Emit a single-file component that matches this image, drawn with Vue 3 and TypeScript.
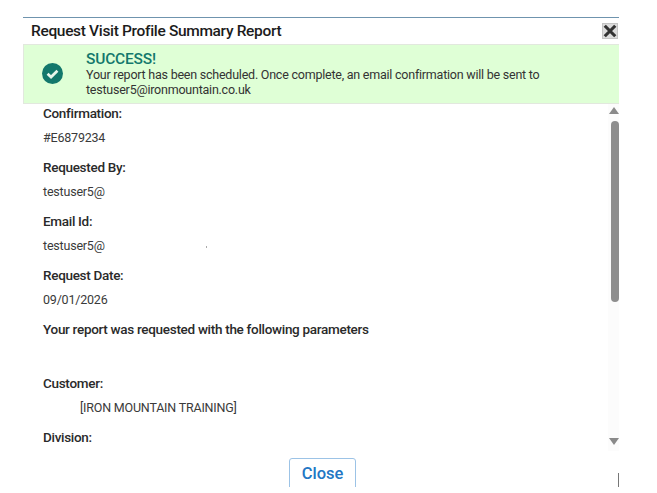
<script setup lang="ts">
interface Field { label: string; value: string; speck?: boolean }
const fields: Field[] = [
  { label: 'Confirmation:', value: '#E6879234' },
  { label: 'Requested By:', value: 'testuser5@' },
  { label: 'Email Id:', value: 'testuser5@', speck: true },
  { label: 'Request Date:', value: '09/01/2026' },
]
</script>

<template>
  <div class="page">
    <div class="dialog">
      <span class="rule-gap gap-a"></span>
      <span class="rule-gap gap-b"></span>
      <header class="title-bar">
        <h1 class="title">Request Visit Profile Summary Report</h1>
        <button class="x-btn" aria-label="Close">
          <svg viewBox="0 0 16 16" width="14" height="14">
            <path d="M2 2 L14 14 M14 2 L2 14" stroke="#333" stroke-width="3.6" fill="none" />
          </svg>
        </button>
      </header>
      <section class="banner">
        <svg class="check" viewBox="0 0 20 20" width="21" height="21">
          <circle cx="10" cy="10" r="10" fill="#13786c" />
          <path d="M5.3 10.3 L8.6 13.4 L14.7 7.4" stroke="#e9f7ec" stroke-width="2.6" fill="none" />
        </svg>
        <div class="banner-text">
          <div class="success">SUCCESS!</div>
          <div class="msg">Your report has been scheduled. Once complete, an email confirmation will be sent to testuser5@ironmountain.co.uk</div>
        </div>
      </section>
      <div class="content">
        <div class="scroll-body">
          <div v-for="f in fields" :key="f.label" class="field">
            <div class="label">{{ f.label }}</div>
            <div class="value">{{ f.value }}<span v-if="f.speck" class="speck"></span></div>
          </div>
          <div class="label para">Your report was requested with the following parameters</div>
          <div class="field">
            <div class="label">Customer:</div>
            <div class="value indented">[IRON MOUNTAIN TRAINING]</div>
          </div>
          <div class="field">
            <div class="label">Division:</div>
          </div>
        </div>
        <div class="scrollbar">
          <span class="arrow up"></span>
          <span class="thumb"></span>
          <span class="spacer"></span>
          <span class="arrow down"></span>
        </div>
      </div>
      <footer class="footer">
        <button class="close-btn">Close</button>
      </footer>
    </div>
  </div>
</template>

<style>
html, body { margin: 0; background: #fff; }
</style>

<style scoped>
.page {
  width: 657px;
  height: 493px;
  box-sizing: border-box;
  padding: 17px 38px 0 23px;
  overflow: hidden;
  background: #fff;
  font-family: Roboto, "Liberation Sans", sans-serif;
  color: #333;
}
.dialog {
  height: 469px;
  display: flex;
  flex-direction: column;
  border-top: 1px solid #6f94ae;
  overflow: hidden;
  position: relative;
}
.rule-gap {
  position: absolute;
  top: -1px;
  height: 1px;
  background: repeating-linear-gradient(90deg, #fff 0 3px, #b9cbd8 3px 6px);
}
.gap-a { left: 482px; width: 60px; }
.gap-b { left: 572px; width: 24px; }
.title-bar {
  height: 26px;
  padding: 0 1px 0 8px;
  display: flex;
  align-items: center;
  justify-content: space-between;
}
.title {
  margin: 0;
  font-size: 15.5px;
  font-weight: 500;
  letter-spacing: -0.33px;
  color: #1c1c1c;
  line-height: 26px;
}
.x-btn {
  width: 16px;
  height: 16px;
  padding: 0;
  border: 1px solid #c4c4c4;
  background: #dcdcdc;
  display: flex;
  align-items: center;
  justify-content: center;
}
.banner {
  height: 60px;
  box-sizing: border-box;
  flex: none;
  background: #dfffd6;
  border: 1px solid #e2e8de;
  border-right: 0;
  display: flex;
  align-items: center;
  padding: 0 60px 2px 18px;
  gap: 23px;
}
.check { flex: none; margin-top: 1px; }
.banner-text { margin-top: 3px; }
.success {
  color: #13786c;
  font-size: 15.5px;
  font-weight: 500;
  letter-spacing: -0.2px;
  line-height: 15px;
}
.msg {
  font-size: 12.5px;
  letter-spacing: -0.23px;
  line-height: 14.5px;
  margin-top: 1px;
  color: #333;
}
.content {
  height: 347px;
  flex: none;
  display: flex;
  overflow: hidden;
}
.scroll-body {
  flex: 1;
  padding: 0 0 0 20px;
  overflow: hidden;
}
.field { margin-bottom: 6px; }
.label {
  font-size: 13.5px;
  font-weight: 500;
  letter-spacing: -0.3px;
  line-height: 18px;
  color: #2a2a2a;
}
.value {
  font-size: 12.5px;
  letter-spacing: -0.2px;
  line-height: 18px;
  margin-top: 7px;
  color: #3a3a3a;
  height: 23px;
  position: relative;
}
.speck {
  position: absolute;
  left: 163px;
  top: 9px;
  width: 1px;
  height: 2px;
  background: #aaa;
}
.para { margin-bottom: 36px; }
.indented { margin-left: 37px; }
.scrollbar {
  width: 11px;
  flex: none;
  background: #fcfcfc;
  display: flex;
  flex-direction: column;
  align-items: flex-end;
}
.arrow {
  width: 0;
  height: 0;
  border-left: 5px solid transparent;
  border-right: 5px solid transparent;
  flex: none;
}
.arrow.up {
  border-bottom: 7px solid #8a8a8a;
  margin-top: 3px;
}
.arrow.down {
  border-top: 7px solid #8a8a8a;
  margin-bottom: 6px;
}
.thumb {
  width: 8px;
  height: 181px;
  margin-top: 7px;
  border-radius: 4px;
  background: #8e8e8e;
  flex: none;
}
.spacer { flex: 1; }
.footer {
  flex: 1;
  display: flex;
  justify-content: center;
  padding: 7px 0 0 3px;
  position: relative;
}
.footer::after {
  content: "";
  position: absolute;
  right: 0;
  top: 22px;
  width: 1px;
  height: 14px;
  background: #777;
}
.close-btn {
  width: 67px;
  height: 36px;
  box-sizing: border-box;
  background: #fff;
  border: 1px solid #9cc3e6;
  border-radius: 3px;
  padding: 0 0 6px;
  color: #2277c4;
  font-family: inherit;
  font-size: 16.5px;
  font-weight: 500;
}
</style>
